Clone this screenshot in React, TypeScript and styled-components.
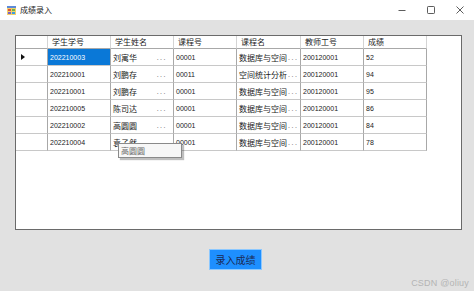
import styled, { createGlobalStyle } from "styled-components";

const GlobalStyle = createGlobalStyle`
  html, body {
    margin: 0;
    padding: 0;
    width: 474px;
    height: 291px;
    overflow: hidden;
    background: #e1e1e1;
  }
  * {
    box-sizing: border-box;
  }
`;

const Window = styled.div`
  position: relative;
  width: 474px;
  height: 291px;
  display: flex;
  flex-direction: column;
  background: #e1e1e1;
  font-family: "Noto Sans CJK SC", "Liberation Sans", sans-serif;
  color: #1a1a1a;
`;

const TitleBar = styled.div`
  height: 20px;
  background: #ffffff;
  display: flex;
  align-items: center;
  padding-left: 7px;
`;

const Title = styled.span`
  margin-left: 4px;
  font-size: 8px;
  line-height: 10px;
  color: #222;
`;

const Controls = styled.div`
  margin-left: auto;
  display: flex;
  align-items: center;
  height: 100%;
`;

const ControlButton = styled.div`
  width: 29px;
  height: 20px;
  display: flex;
  align-items: center;
  justify-content: center;
`;

const Body = styled.div`
  flex: 1;
  display: flex;
  flex-direction: column;
  padding: 15px 12px 0 15px;
`;

const GridBox = styled.div`
  width: 447px;
  height: 195px;
  border: 1px solid #6a6a6a;
  background: #ffffff;
  position: relative;
`;

const Grid = styled.div`
  display: grid;
  grid-template-columns: 32px 63px 63px 63px 64px 63px 63px;
  grid-template-rows: 13px;
  grid-auto-rows: 17px;
  width: 411px;
`;

const Row = styled.div`
  display: contents;
`;

const HeaderCell = styled.div`
  border-right: 1px solid #d4d4d4;
  border-bottom: 1px solid #a8a8a8;
  font-size: 8px;
  line-height: 12px;
  padding-left: 4px;
  white-space: nowrap;
  color: #222;
`;

const RowHead = styled.div`
  border-right: 1px solid #a8a8a8;
  border-bottom: 1px solid #c8c8c8;
  display: flex;
  align-items: center;
  padding-left: 5px;
`;

const Arrow = styled.div`
  width: 0;
  height: 0;
  border-top: 3px solid transparent;
  border-bottom: 3px solid transparent;
  border-left: 4px solid #111;
`;

const Cell = styled.div<{ $selected?: boolean; $num?: boolean }>`
  border-right: 1px solid #a8a8a8;
  border-bottom: 1px solid #c8c8c8;
  display: flex;
  align-items: center;
  padding-left: 2px;
  padding-right: 6px;
  white-space: nowrap;
  overflow: hidden;
  font-family: ${(p) =>
    p.$num ? '"Liberation Sans", Arial, sans-serif' : '"Noto Sans CJK SC", sans-serif'};
  font-size: ${(p) => (p.$num ? "7px" : "8px")};
  background: ${(p) => (p.$selected ? "#0a78d7" : "transparent")};
  color: ${(p) => (p.$selected ? "#ffffff" : "#1a1a1a")};
`;

const Dots = styled.span<{ $trail?: boolean }>`
  margin-left: ${(p) => (p.$trail ? "1px" : "auto")};
  font-family: "Liberation Sans", Arial, sans-serif;
  font-size: 7px;
  letter-spacing: 1.5px;
  color: #555;
`;

const Tooltip = styled.div`
  position: absolute;
  left: 102px;
  top: 107px;
  width: 64px;
  height: 15px;
  background: #f7f7f7;
  border: 1px solid #8a8a8a;
  box-shadow: 2px 2px 1px rgba(0, 0, 0, 0.25);
  font-size: 8px;
  line-height: 13px;
  padding-left: 2px;
  color: #6a6a6a;
`;

const ButtonRow = styled.div`
  padding: 15px 0 0 194px;
`;

const SubmitButton = styled.button`
  width: 53px;
  height: 21px;
  padding: 0;
  border: 1px solid #8cc8ff;
  background: #1e8fff;
  color: #1b2a55;
  font-family: "Noto Sans CJK SC", sans-serif;
  font-size: 10px;
  line-height: 19px;
`;

const Watermark = styled.div`
  position: absolute;
  right: 5px;
  bottom: 3px;
  font-family: "Liberation Sans", Arial, sans-serif;
  font-size: 9px;
  color: #b4b4b4;
  letter-spacing: 0.2px;
`;

const AppIcon = () => (
  <svg width="9" height="9" viewBox="0 0 9 9">
    <rect x="0" y="0" width="9" height="9" fill="#f3d06a" />
    <rect x="0" y="0" width="9" height="2" fill="#5c8ad8" />
    <rect x="1" y="3" width="3" height="2" fill="#e0503c" />
    <rect x="5" y="3" width="3" height="2" fill="#6bb34c" />
    <rect x="1" y="6" width="3" height="2" fill="#7a62c7" />
    <rect x="5" y="6" width="3" height="2" fill="#3b9de0" />
  </svg>
);

const rows = [
  { id: "202210003", name: "刘寓华", cno: "00001", cname: "数据库与空间", tno: "200120001", score: "52" },
  { id: "202210001", name: "刘鹏存", cno: "00011", cname: "空间统计分析", tno: "200120001", score: "94" },
  { id: "202210001", name: "刘鹏存", cno: "00001", cname: "数据库与空间", tno: "200120001", score: "95" },
  { id: "202210005", name: "陈司达", cno: "00001", cname: "数据库与空间", tno: "200120001", score: "86" },
  { id: "202210002", name: "高圆圆", cno: "00001", cname: "数据库与空间", tno: "200120001", score: "84" },
  { id: "202210004", name: "袁子然", cno: "00001", cname: "数据库与空间", tno: "200120001", score: "78" },
];

const headers = ["学生学号", "学生姓名", "课程号", "课程名", "教师工号", "成绩"];

export default function App() {
  return (
    <>
      <GlobalStyle />
      <Window>
        <TitleBar>
          <AppIcon />
          <Title>成绩录入</Title>
          <Controls>
            <ControlButton>
              <svg width="8" height="8" viewBox="0 0 8 8">
                <line x1="0.5" y1="4.5" x2="7.5" y2="4.5" stroke="#333" strokeWidth="0.8" />
              </svg>
            </ControlButton>
            <ControlButton>
              <svg width="8" height="8" viewBox="0 0 8 8">
                <rect x="0.5" y="0.5" width="7" height="7" fill="none" stroke="#333" strokeWidth="0.8" rx="0.8" />
              </svg>
            </ControlButton>
            <ControlButton>
              <svg width="8" height="8" viewBox="0 0 8 8">
                <path d="M0.5 0.5 L7.5 7.5 M7.5 0.5 L0.5 7.5" stroke="#333" strokeWidth="0.8" />
              </svg>
            </ControlButton>
          </Controls>
        </TitleBar>
        <Body>
          <GridBox>
            <Grid>
              <Row>
                <HeaderCell />
                {headers.map((h) => (
                  <HeaderCell key={h}>{h}</HeaderCell>
                ))}
              </Row>
              {rows.map((r, i) => (
                <Row key={i}>
                  <RowHead>{i === 0 && <Arrow />}</RowHead>
                  <Cell $num $selected={i === 0}>{r.id}</Cell>
                  <Cell>
                    {r.name}
                    <Dots>...</Dots>
                  </Cell>
                  <Cell $num>{r.cno}</Cell>
                  <Cell>
                    {r.cname}
                    <Dots $trail>...</Dots>
                  </Cell>
                  <Cell $num>{r.tno}</Cell>
                  <Cell $num>{r.score}</Cell>
                </Row>
              ))}
            </Grid>
            <Tooltip>高圆圆</Tooltip>
          </GridBox>
          <ButtonRow>
            <SubmitButton>录入成绩</SubmitButton>
          </ButtonRow>
        </Body>
        <Watermark>CSDN @oliuy</Watermark>
      </Window>
    </>
  );
}
